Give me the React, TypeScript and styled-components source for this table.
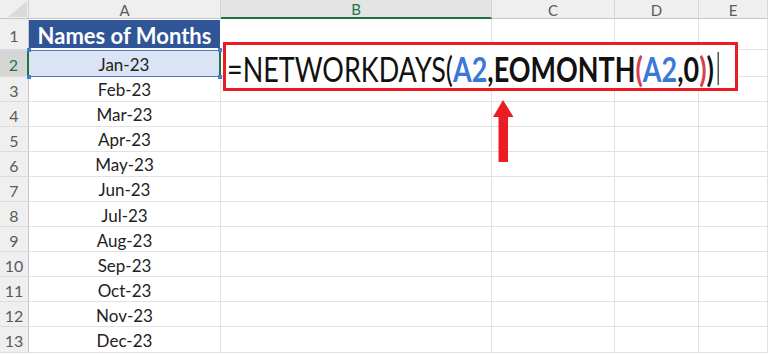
import React from 'react'
import styled, { createGlobalStyle, css } from 'styled-components'

const GlobalStyle = createGlobalStyle`
  html, body {
    margin: 0;
    padding: 0;
    background: #ffffff;
    overflow: hidden;
  }
  body {
    font-family: Lato, 'Liberation Sans', sans-serif;
  }
`

const columns = [
  { name: 'A', active: false },
  { name: 'B', active: true },
  { name: 'C', active: false },
  { name: 'D', active: false },
  { name: 'E', active: false },
]

const months = [
  'Jan-23',
  'Feb-23',
  'Mar-23',
  'Apr-23',
  'May-23',
  'Jun-23',
  'Jul-23',
  'Aug-23',
  'Sep-23',
  'Oct-23',
  'Nov-23',
  'Dec-23',
]

const ACTIVE_ROW = 2

export default function App() {
  return (
    <Page>
      <GlobalStyle />
      <Sheet>
        <Corner />
        {columns.map((col) => (
          <ColHeader key={col.name} $active={col.active}>
            {col.name}
          </ColHeader>
        ))}

        <RowHeader $active={false}>1</RowHeader>
        <TitleCell>Names of Months</TitleCell>
        {columns.slice(1).map((col) => (
          <Cell key={col.name} />
        ))}

        {months.map((month, i) => {
          const row = i + 2
          const selected = row === ACTIVE_ROW
          return (
            <React.Fragment key={month}>
              <RowHeader $active={selected}>{row}</RowHeader>
              {selected ? (
                <SelectedCell>
                  {month}
                  <Handle $x="left" $y="top" />
                  <Handle $x="right" $y="top" />
                  <Handle $x="left" $y="bottom" />
                  <Handle $x="right" $y="bottom" />
                </SelectedCell>
              ) : (
                <Cell>{month}</Cell>
              )}
              {columns.slice(1).map((col) => (
                <Cell key={col.name} />
              ))}
            </React.Fragment>
          )
        })}
      </Sheet>

      {/* cell B2 in edit mode, framed in red */}
      <FormulaBox>
        <Formula>
          =NETWORKDAYS(
          <Ref>A2</Ref>
          <Strong>,EOMONTH</Strong>
          <Paren>(</Paren>
          <Ref>A2</Ref>
          <Strong>,0</Strong>
          <Paren>)</Paren>
          <Strong>)</Strong>
          <Caret />
        </Formula>
      </FormulaBox>

      <Arrow viewBox="0 0 26 65" width="26" height="65">
        <polygon points="13,1 23.5,18 18,18 18,63 8.5,63 8.5,18 3,18" fill="#ec1c24" />
      </Arrow>
    </Page>
  )
}

const Page = styled.div`
  position: relative;
  width: 768px;
  height: 354px;
  overflow: hidden;
`

const Sheet = styled.div`
  display: grid;
  grid-template-columns: 29px 192px 271px 123px 84px 1fr;
  grid-template-rows: 19px 31px 26.5px repeat(11, 25.1px);
  font-family: Lato, 'Liberation Sans', sans-serif;
`

const headerBase = css`
  box-sizing: border-box;
  display: flex;
  align-items: center;
  justify-content: center;
  color: #5a5a5a;
  background: #efefef;
`

const Corner = styled.div`
  ${headerBase};
  position: relative;
  border-right: 1px solid #d0d0d0;
  border-bottom: 1px solid #c6c6c6;

  &::after {
    content: '';
    position: absolute;
    right: 1px;
    bottom: 1px;
    width: 19px;
    height: 16px;
    background: #dadada;
    clip-path: polygon(100% 0, 100% 100%, 0 100%);
  }
`

const ColHeader = styled.div<{ $active: boolean }>`
  ${headerBase};
  font-size: 15px;
  padding-top: 1px;
  border-right: 1px solid #d6d6d6;
  border-bottom: ${(p) => (p.$active ? '2px solid #217346' : '1px solid #c6c6c6')};
  background: ${(p) => (p.$active ? '#e4e4e4' : '#efefef')};
  color: ${(p) => (p.$active ? '#217346' : '#5a5a5a')};
`

const RowHeader = styled.div<{ $active: boolean }>`
  ${headerBase};
  font-size: 16px;
  padding-top: 3px;
  border-bottom: 1px solid #dcdcdc;
  border-right: ${(p) => (p.$active ? '2px solid #217346' : '1px solid #c6c6c6')};
  background: ${(p) => (p.$active ? '#d6d6d6' : '#efefef')};
  color: ${(p) => (p.$active ? '#217346' : '#5a5a5a')};
`

const Cell = styled.div`
  box-sizing: border-box;
  display: flex;
  align-items: center;
  justify-content: center;
  padding-top: 2px;
  border-right: 1px solid #e1e1e1;
  border-bottom: 1px solid #e1e1e1;
  font-size: 17px;
  color: #222222;
`

const TitleCell = styled(Cell)`
  background: #2f5597;
  color: #ffffff;
  font-weight: 700;
  font-size: 22px;
  border-top: 1px solid #ffffff;
  border-right: 1px solid #ffffff;
  border-bottom: 2px solid #ffffff;
`

const SelectedCell = styled(Cell)`
  position: relative;
  background: #dbe4f4;
  border-top: 1px solid #4a7bd0;
  border-bottom: 1px solid #4a7bd0;
  border-right: 2px solid #217346;
`

const Handle = styled.span<{ $x: 'left' | 'right'; $y: 'top' | 'bottom' }>`
  position: absolute;
  width: 4px;
  height: 4px;
  background: #4a7bd0;
  ${(p) => (p.$x === 'left' ? 'left: -2px;' : 'right: -3px;')}
  ${(p) => (p.$y === 'top' ? 'top: -3px;' : 'bottom: -3px;')}
`

const FormulaBox = styled.div`
  position: absolute;
  left: 223px;
  top: 42px;
  width: 515px;
  height: 49px;
  box-sizing: border-box;
  border: 3.5px solid #ec1c24;
  background: #ffffff;
  display: flex;
  align-items: center;
  padding-left: 1px;
  overflow: hidden;
`

const Formula = styled.div`
  display: flex;
  align-items: center;
  flex: none;
  font-family: Lato, 'Liberation Sans', sans-serif;
  font-size: 35px;
  line-height: 1;
  color: #111111;
  white-space: pre;
  margin-top: 3px;
  transform: scaleX(0.77);
  transform-origin: left center;
`

const Strong = styled.span`
  font-weight: 700;
  color: #111111;
`

const Ref = styled(Strong)`
  color: #3b78d8;
`

const Paren = styled(Strong)`
  color: #d6404a;
`

const Caret = styled.span`
  display: inline-block;
  width: 1.4px;
  height: 33px;
  margin-left: 5px;
  background: #555555;
`

const Arrow = styled.svg`
  position: absolute;
  left: 490px;
  top: 99px;
`
